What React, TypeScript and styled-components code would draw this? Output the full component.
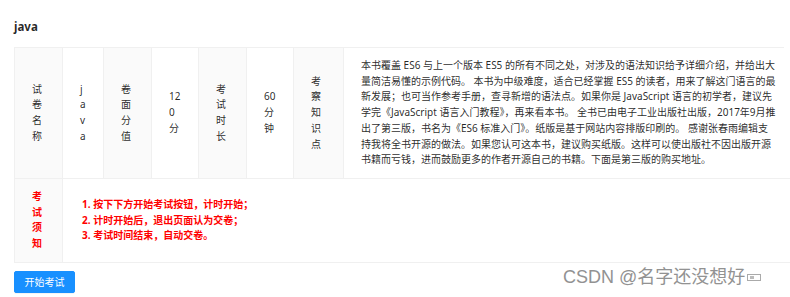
import React from "react";
import styled, { createGlobalStyle } from "styled-components";

const GlobalStyle = createGlobalStyle`
  html, body {
    margin: 0;
    padding: 0;
    background: #fff;
  }
  body {
    font-family: "Noto Sans", "Noto Sans CJK SC", sans-serif;
    color: rgba(0, 0, 0, 0.85);
  }
`;

const Page = styled.div`
  position: relative;
  width: 790px;
  height: 297px;
  box-sizing: border-box;
  padding: 18px 6px 0 14px;
  overflow: hidden;
`;

const Title = styled.div`
  font-size: 11.5px;
  line-height: 18px;
  font-weight: bold;
  margin-bottom: 11px;
  font-family: "Noto Sans", "Noto Sans CJK SC", sans-serif;
`;

const Table = styled.div`
  display: grid;
  grid-template-columns: 48px 41px 48px 47px 48px 47px 50px 1fr;
  width: 770px;
  box-sizing: border-box;
  border-top: 1px solid #f0f0f0;
  border-left: 1px solid #f0f0f0;
`;

const Cell = styled.div<{ $label?: boolean; $span?: number }>`
  display: flex;
  align-items: center;
  box-sizing: border-box;
  padding: 10px 17px;
  font-size: 10px;
  line-height: 15.7px;
  word-break: break-all;
  border-right: 1px solid #f0f0f0;
  border-bottom: 1px solid #f0f0f0;
  background: ${(p) => (p.$label ? "#fafafa" : "#fff")};
  color: rgba(0, 0, 0, 0.85);
  grid-column: ${(p) => (p.$span ? `span ${p.$span}` : "auto")};
`;

const WarnLabel = styled(Cell)`
  color: #ff0000;
  font-weight: bold;
`;

const Lines = styled.div`
  display: flex;
  flex-direction: column;
`;

const Line = styled.span`
  white-space: nowrap;
`;

const Notice = styled(Lines)`
  color: #ff0000;
  font-weight: bold;
  line-height: 15.5px;
  padding-left: 2px;
`;

const StartButton = styled.button`
  display: block;
  margin-top: 8px;
  height: 22px;
  width: 61px;
  padding: 0;
  border: 1px solid #1890ff;
  border-radius: 2px;
  background: #1890ff;
  color: #fff;
  font-size: 10px;
  font-family: "Noto Sans CJK SC", sans-serif;
  box-shadow: 0 1px 0 rgba(0, 0, 0, 0.045);
  cursor: pointer;
`;

const Watermark = styled.div`
  position: absolute;
  left: 563px;
  top: 266px;
  display: flex;
  align-items: center;
  gap: 2px;
  font-size: 18px;
  line-height: 22px;
  color: #929292;
  font-family: "Liberation Sans", "Noto Sans CJK SC", sans-serif;
  text-shadow: 0 0 1px #fff;
  white-space: nowrap;
`;

const knowledge = [
  "本书覆盖 ES6 与上一个版本 ES5 的所有不同之处，对涉及的语法知识给予详细介绍，并给出大",
  "量简洁易懂的示例代码。 本书为中级难度，适合已经掌握 ES5 的读者，用来了解这门语言的最",
  "新发展；也可当作参考手册，查寻新增的语法点。如果你是 JavaScript 语言的初学者，建议先",
  "学完《JavaScript 语言入门教程》，再来看本书。 全书已由电子工业出版社出版，2017年9月推",
  "出了第三版，书名为《ES6 标准入门》。纸版是基于网站内容排版印刷的。 感谢张春雨编辑支",
  "持我将全书开源的做法。如果您认可这本书，建议购买纸版。这样可以使出版社不因出版开源",
  "书籍而亏钱，进而鼓励更多的作者开源自己的书籍。下面是第三版的购买地址。",
];

const rules = [
  "1. 按下下方开始考试按钮，计时开始；",
  "2. 计时开始后，退出页面认为交卷；",
  "3. 考试时间结束，自动交卷。",
];

export default function App() {
  return (
    <Page>
      <GlobalStyle />
      <Title>java</Title>
      <Table>
        <Cell $label>试卷名称</Cell>
        <Cell>java</Cell>
        <Cell $label>卷面分值</Cell>
        <Cell>120分</Cell>
        <Cell $label>考试时长</Cell>
        <Cell>60分钟</Cell>
        <Cell $label>考察知识点</Cell>
        <Cell>
          <Lines>
            {knowledge.map((l) => (
              <Line key={l}>{l}</Line>
            ))}
          </Lines>
        </Cell>
        <WarnLabel $label>考试须知</WarnLabel>
        <Cell $span={7}>
          <Notice>
            {rules.map((r) => (
              <Line key={r}>{r}</Line>
            ))}
          </Notice>
        </Cell>
      </Table>
      <StartButton>开始考试</StartButton>
      <Watermark>
        CSDN @名字还没想好
        <svg width="14" height="10" viewBox="0 0 14 10">
          <rect x="0.5" y="2.5" width="13" height="6" fill="none" stroke="#aaa" />
          <rect x="3" y="4" width="4" height="3" fill="#bbb" />
        </svg>
      </Watermark>
    </Page>
  );
}
